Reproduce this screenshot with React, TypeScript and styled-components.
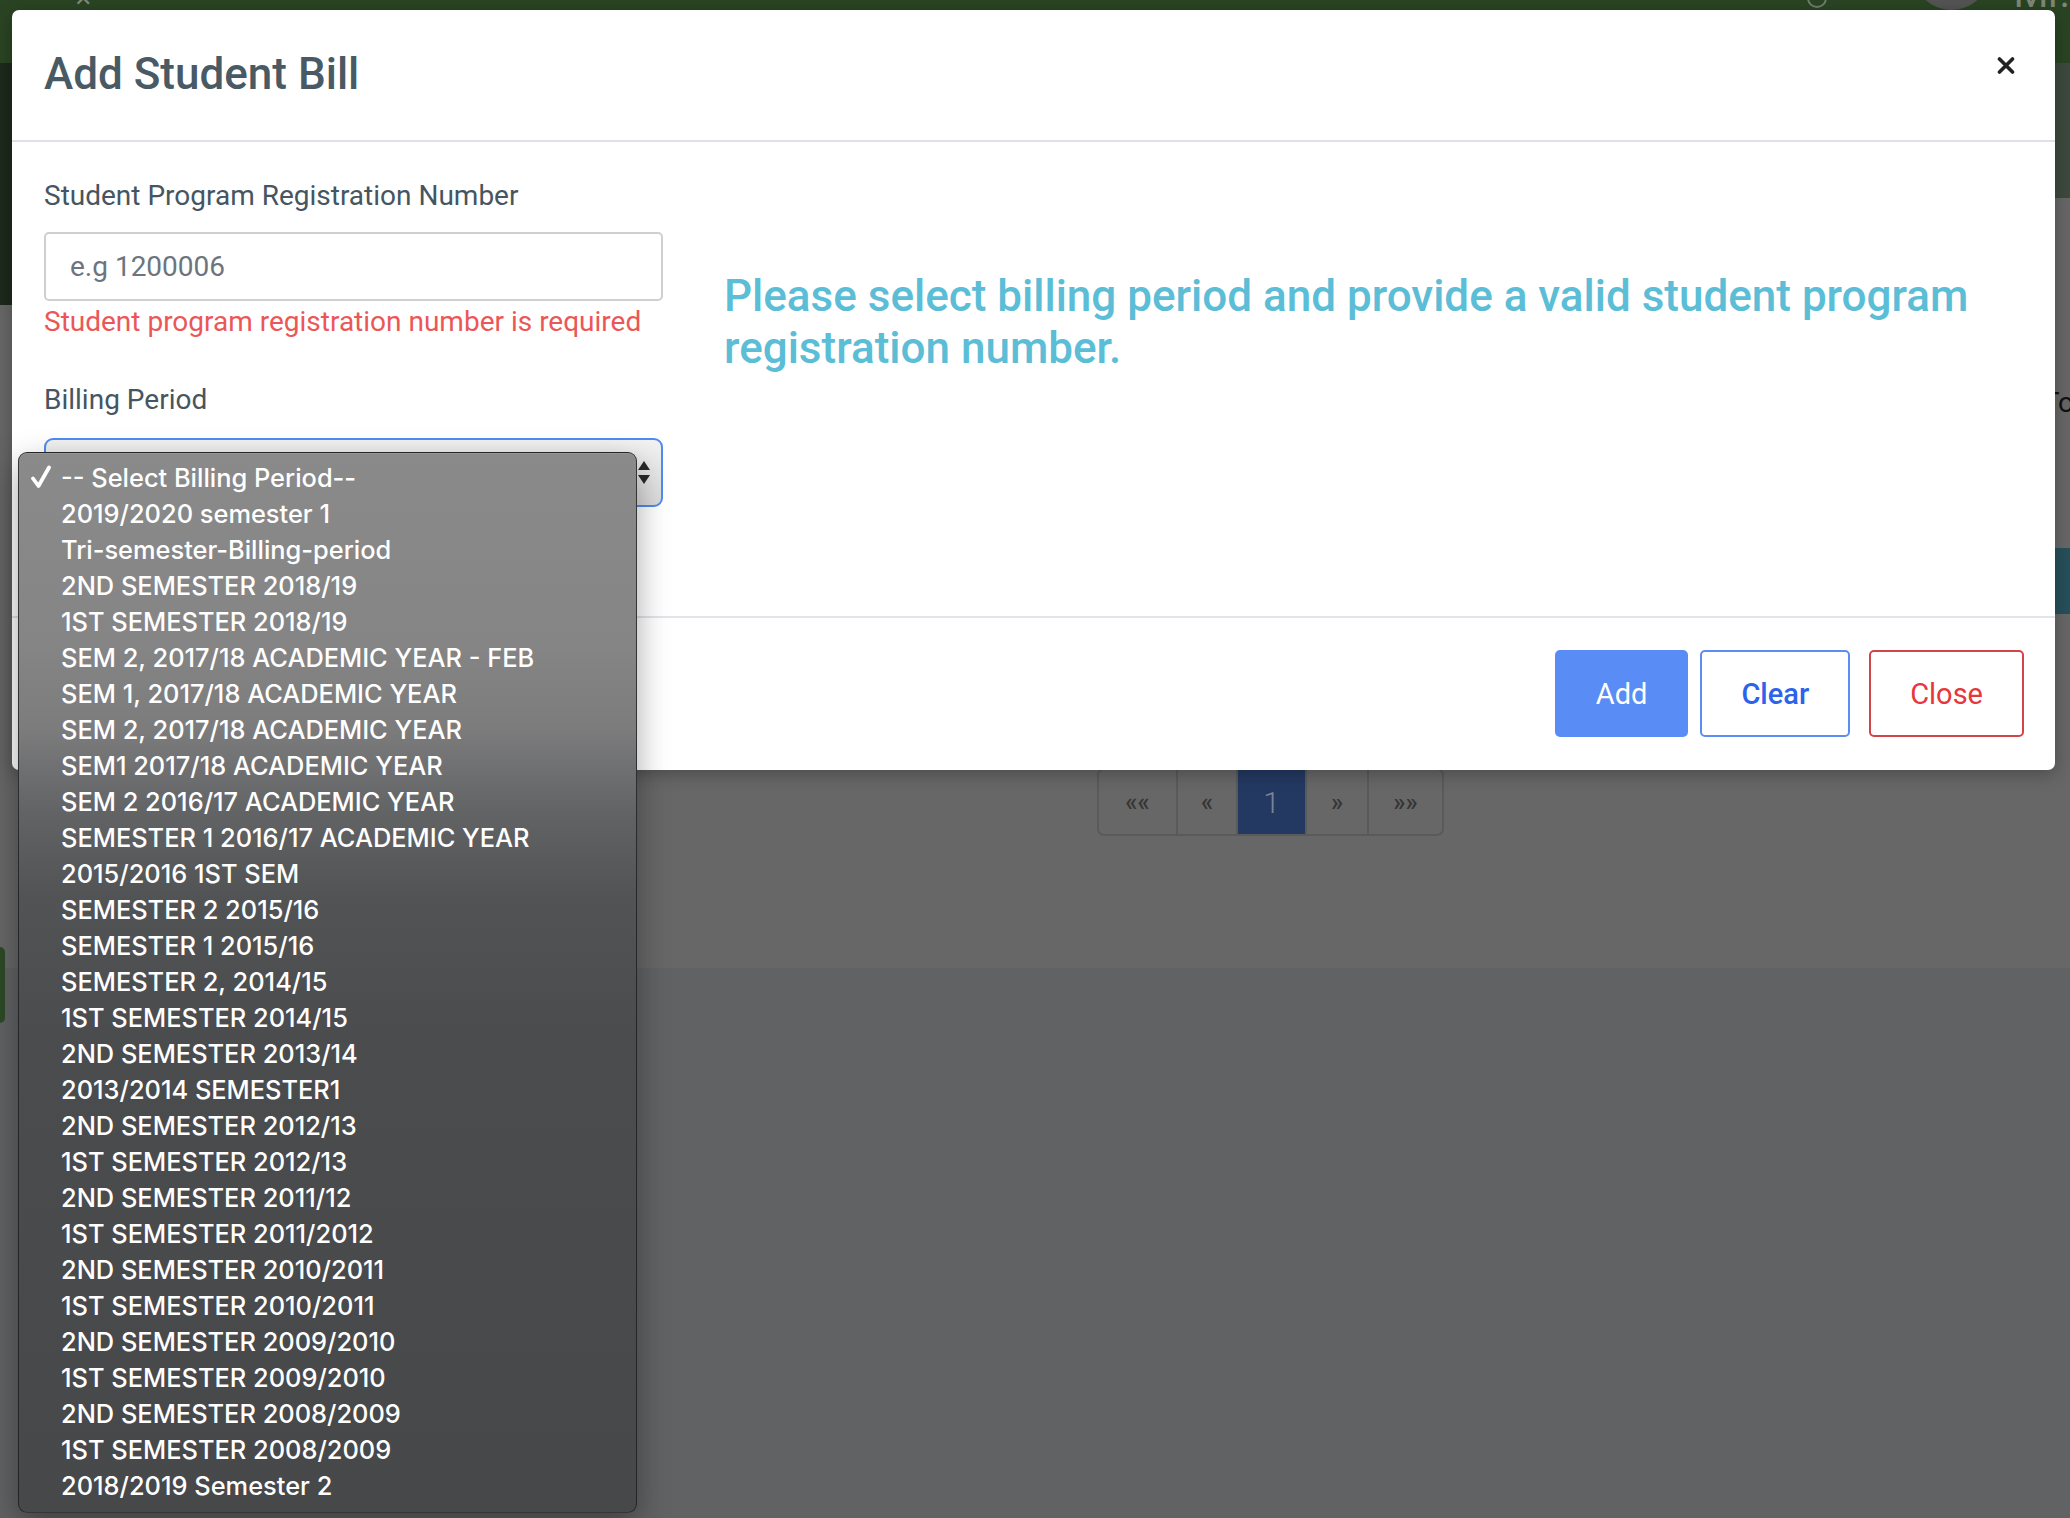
import React from "react";
import styled, { createGlobalStyle } from "styled-components";

const GlobalStyle = createGlobalStyle`
  html, body { margin: 0; padding: 0; }
  body {
    width: 2070px;
    height: 1518px;
    overflow: hidden;
    background: #616264;
    font-family: Roboto, "Liberation Sans", sans-serif;
  }
  * { box-sizing: border-box; }
`;

const Page = styled.div`
  position: relative;
  width: 2070px;
  height: 1518px;
  overflow: hidden;
  display: flex;
  flex-direction: column;
  background: #616264;
`;

const TopBar = styled.header`
  flex: none;
  height: 63px;
  background: #2a4423;
  display: flex;
  align-items: flex-start;
  padding-left: 74px;
  overflow: hidden;
`;

const TopGlyph = styled.span`
  margin-top: -14px;
  font-family: "DejaVu Sans", sans-serif;
  font-size: 22px;
  color: #7f8c7b;
`;

const TopSpacer = styled.div`
  flex: 1;
`;

const BellOutline = styled.div`
  width: 20px;
  height: 40px;
  margin-top: -32px;
  border: 2px solid #6f7d6a;
  border-radius: 10px;
  margin-right: 86px;
`;

const Avatar = styled.div`
  width: 77px;
  height: 77px;
  margin-top: -67px;
  border-radius: 50%;
  background: radial-gradient(circle at 50% 40%, #6a6a6a 0 22px, #545454 23px);
  margin-right: 23px;
`;

const UserName = styled.span`
  margin-top: -30px;
  font-size: 40px;
  color: #7d887a;
  white-space: nowrap;
`;

const PageBody = styled.div`
  flex: 1;
  display: flex;
`;

const Rail = styled.aside`
  flex: none;
  width: 12px;
  display: flex;
  flex-direction: column;
  background: linear-gradient(to bottom, #676767 0, #676767 905px, #616264 905px);
`;

const RailDark = styled.div`
  height: 242px;
  background: #1d291c;
`;

const RailTab = styled.div`
  width: 5px;
  height: 76px;
  margin-top: 642px;
  background: #2d4a26;
  border-radius: 0 6px 6px 0;
`;

const Main = styled.main`
  flex: 1;
  display: flex;
  flex-direction: column;
`;

const SubBar = styled.div`
  flex: none;
  height: 135px;
  background: #3d4a3d;
`;

const Content = styled.section`
  flex: none;
  height: 770px;
  background: #676767;
  display: flex;
  flex-direction: column;
`;

const EdgeRow = styled.div<{ $top: number }>`
  display: flex;
  justify-content: flex-end;
  margin-top: ${(p) => p.$top}px;
`;

const EdgeLabel = styled.span`
  font-size: 28px;
  line-height: 40px;
  color: #111;
  margin-right: -4px;
`;

const TealButton = styled.div`
  width: 200px;
  height: 66px;
  margin-right: -170px;
  padding-left: 158px;
  background: #26505b;
  color: #a7b9bd;
  font-size: 28px;
  display: flex;
  align-items: center;
  border-radius: 5px;
`;

const Pagination = styled.nav`
  display: flex;
  align-self: flex-start;
  margin-top: 154px;
  margin-left: 1085px;
  height: 68px;
  border: 2px solid #5a5a5a;
  border-radius: 7px;
  overflow: hidden;
`;

const PageItem = styled.span<{ $w: number; $active?: boolean }>`
  width: ${(p) => p.$w}px;
  display: flex;
  align-items: center;
  justify-content: center;
  border-left: 2px solid #5a5a5a;
  &:first-child { border-left: none; }
  background: ${(p) => (p.$active ? "#243962" : "transparent")};
  color: ${(p) => (p.$active ? "#7b8596" : "#353535")};
  font-size: ${(p) => (p.$active ? 30 : 25)}px;
  font-weight: ${(p) => (p.$active ? 300 : 500)};
`;

const Lower = styled.div`
  flex: 1;
  background: #616264;
`;

/* ---------- modal ---------- */

const Modal = styled.div`
  position: absolute;
  left: 12px;
  top: 10px;
  width: 2043px;
  height: 760px;
  background: #fff;
  border-radius: 7px;
  box-shadow: 0 4px 18px rgba(0, 0, 0, 0.28);
  display: flex;
  flex-direction: column;
  z-index: 5;
`;

const ModalHeader = styled.div`
  flex: none;
  display: flex;
  justify-content: space-between;
  align-items: flex-start;
  padding: 38px 40px 39px 32px;
  border-bottom: 2px solid #dee2e6;
`;

const Title = styled.h4`
  margin: 0;
  font-family: Roboto, "Liberation Sans", sans-serif;
  font-weight: 500;
  font-size: 44px;
  line-height: 53px;
  color: #495a65;
`;

const CloseX = styled.button`
  margin-top: 9px;
  padding: 0;
  border: none;
  background: none;
  width: 18px;
  height: 17px;
  display: flex;
`;

const ModalBody = styled.div`
  flex: 1;
  display: grid;
  grid-template-columns: 619px 1fr;
  column-gap: 61px;
  align-items: start;
  padding: 33px 32px 0;
`;

const FormColumn = styled.div`
  display: flex;
  flex-direction: column;
`;

const FieldLabel = styled.label<{ $gap?: number; $after?: number }>`
  display: block;
  margin-top: ${(p) => p.$gap ?? 0}px;
  margin-bottom: ${(p) => p.$after ?? 15}px;
  font-size: 28px;
  line-height: 42px;
  color: #46555f;
`;

const TextInput = styled.input`
  width: 100%;
  height: 69px;
  padding: 0 24px;
  border: 2px solid #cfcfcf;
  border-radius: 5px;
  font-family: Roboto, "Liberation Sans", sans-serif;
  font-size: 28px;
  color: #495057;
  outline: none;
  &::placeholder { color: #6c757d; }
`;

const ErrorText = styled.div`
  font-size: 28px;
  line-height: 42px;
  color: #eb5757;
`;

const SelectWrap = styled.div`
  position: relative;
`;

const SelectBox = styled.div`
  height: 69px;
  border: 2px solid #4f8bf0;
  border-radius: 9px;
  background: linear-gradient(to bottom, #f2f2f2, #dadada);
  display: flex;
  align-items: center;
  justify-content: flex-end;
  padding-right: 10px;
`;

const Popup = styled.ul`
  position: absolute;
  left: -26px;
  top: 14px;
  width: 619px;
  height: 1061px;
  margin: 0;
  padding: 6px 0 0;
  list-style: none;
  border: 1px solid rgba(25, 25, 25, 0.75);
  border-radius: 9px;
  background: linear-gradient(
    to bottom,
    #8a8a8a 0%,
    #858585 18%,
    #7c7c7d 26%,
    #626365 34%,
    #525355 42%,
    #4b4c4e 55%,
    #47484a 100%
  );
  box-shadow: 0 12px 32px rgba(0, 0, 0, 0.35), inset 0 1px 0 rgba(255, 255, 255, 0.12);
  z-index: 20;
`;

const Option = styled.li`
  height: 36px;
  display: grid;
  grid-template-columns: 42px 1fr;
  align-items: center;
  font-family: Inter, "Noto Sans", sans-serif;
  font-size: 25.4px;
  font-weight: 500;
  color: #fff;
  white-space: nowrap;
`;

const CheckCell = styled.span`
  display: flex;
  align-items: center;
  padding-left: 11px;
`;

const Heading = styled.h3`
  margin: 95px 0 0;
  font-family: Roboto, "Liberation Sans", sans-serif;
  font-weight: 500;
  font-size: 44px;
  line-height: 52px;
  color: #5bbdd6;
`;

const ModalFooter = styled.div`
  flex: none;
  height: 154px;
  display: flex;
  justify-content: flex-end;
  align-items: flex-start;
  padding: 32px 31px 0 0;
  border-top: 2px solid #e1e4e8;
`;

type Tone = "primary" | "outlinePrimary" | "outlineDanger";

const toneStyles: Record<Tone, { bg: string; border: string; color: string; weight: number; ml: number }> = {
  primary: { bg: "#5a8cf5", border: "#5a8cf5", color: "#ffffff", weight: 400, ml: 0 },
  outlinePrimary: { bg: "#ffffff", border: "#5b8df2", color: "#2d62ea", weight: 500, ml: 12 },
  outlineDanger: { bg: "#ffffff", border: "#d1454a", color: "#e6373a", weight: 400, ml: 19 },
};

const FooterButton = styled.button<{ $tone: Tone }>`
  height: 87px;
  padding: 0 39px;
  margin-left: ${(p) => toneStyles[p.$tone].ml}px;
  border: 2px solid ${(p) => toneStyles[p.$tone].border};
  border-radius: 5px;
  background: ${(p) => toneStyles[p.$tone].bg};
  color: ${(p) => toneStyles[p.$tone].color};
  font-family: Roboto, "Liberation Sans", sans-serif;
  font-size: 29px;
  font-weight: ${(p) => toneStyles[p.$tone].weight};
`;

const periods = [
  "-- Select Billing Period--",
  "2019/2020 semester 1",
  "Tri-semester-Billing-period",
  "2ND SEMESTER 2018/19",
  "1ST SEMESTER 2018/19",
  "SEM 2, 2017/18 ACADEMIC YEAR - FEB",
  "SEM 1, 2017/18 ACADEMIC YEAR",
  "SEM 2, 2017/18 ACADEMIC YEAR",
  "SEM1 2017/18 ACADEMIC YEAR",
  "SEM 2 2016/17 ACADEMIC YEAR",
  "SEMESTER 1 2016/17 ACADEMIC YEAR",
  "2015/2016 1ST SEM",
  "SEMESTER 2 2015/16",
  "SEMESTER 1 2015/16",
  "SEMESTER 2, 2014/15",
  "1ST SEMESTER 2014/15",
  "2ND SEMESTER 2013/14",
  "2013/2014 SEMESTER1",
  "2ND SEMESTER 2012/13",
  "1ST SEMESTER 2012/13",
  "2ND SEMESTER 2011/12",
  "1ST SEMESTER 2011/2012",
  "2ND SEMESTER 2010/2011",
  "1ST SEMESTER 2010/2011",
  "2ND SEMESTER 2009/2010",
  "1ST SEMESTER 2009/2010",
  "2ND SEMESTER 2008/2009",
  "1ST SEMESTER 2008/2009",
  "2018/2019 Semester 2",
];

const CheckIcon = () => (
  <svg width="22" height="24" viewBox="0 0 22 24">
    <path d="M3 13.5 L8.5 21 L19 2.5" fill="none" stroke="#fff" strokeWidth="3.8" strokeLinecap="round" strokeLinejoin="round" />
  </svg>
);

const SelectArrows = () => (
  <svg width="14" height="26" viewBox="0 0 14 26">
    <path d="M7 1 L13 10 L1 10 Z" fill="#2a2a2a" />
    <path d="M1 15 L13 15 L7 24 Z" fill="#2a2a2a" />
  </svg>
);

const XIcon = () => (
  <svg width="18" height="17" viewBox="0 0 18 17">
    <path d="M2.5 2 L15.5 15 M15.5 2 L2.5 15" stroke="#222" strokeWidth="3.6" strokeLinecap="round" />
  </svg>
);

export default function App() {
  return (
    <>
      <GlobalStyle />
      <Page>
        <TopBar>
          <TopGlyph>✕</TopGlyph>
          <TopSpacer />
          <BellOutline />
          <Avatar />
          <UserName>Mr.</UserName>
        </TopBar>
        <PageBody>
          <Rail>
            <RailDark />
            <RailTab />
          </Rail>
          <Main>
            <SubBar />
            <Content>
              <EdgeRow $top={185}>
                <EdgeLabel>To</EdgeLabel>
              </EdgeRow>
              <EdgeRow $top={125}>
                <TealButton>ne</TealButton>
              </EdgeRow>
              <Pagination>
                <PageItem $w={77}>««</PageItem>
                <PageItem $w={60}>«</PageItem>
                <PageItem $w={69} $active>1</PageItem>
                <PageItem $w={62}>»</PageItem>
                <PageItem $w={75}>»»</PageItem>
              </Pagination>
            </Content>
            <Lower />
          </Main>
        </PageBody>

        <Modal role="dialog">
          <ModalHeader>
            <Title>Add Student Bill</Title>
            <CloseX aria-label="Close">
              <XIcon />
            </CloseX>
          </ModalHeader>
          <ModalBody>
            <FormColumn>
              <FieldLabel>Student Program Registration Number</FieldLabel>
              <TextInput placeholder="e.g 1200006" readOnly />
              <ErrorText>Student program registration number is required</ErrorText>
              <FieldLabel $gap={36} $after={17}>Billing Period</FieldLabel>
              <SelectWrap>
                <SelectBox>
                  <SelectArrows />
                </SelectBox>
                <Popup>
                  {periods.map((p, i) => (
                    <Option key={p}>
                      <CheckCell>{i === 0 ? <CheckIcon /> : null}</CheckCell>
                      <span>{p}</span>
                    </Option>
                  ))}
                </Popup>
              </SelectWrap>
            </FormColumn>
            <Heading>
              Please select billing period and provide a valid student program registration number.
            </Heading>
          </ModalBody>
          <ModalFooter>
            <FooterButton $tone="primary">Add</FooterButton>
            <FooterButton $tone="outlinePrimary">Clear</FooterButton>
            <FooterButton $tone="outlineDanger">Close</FooterButton>
          </ModalFooter>
        </Modal>
      </Page>
    </>
  );
}
